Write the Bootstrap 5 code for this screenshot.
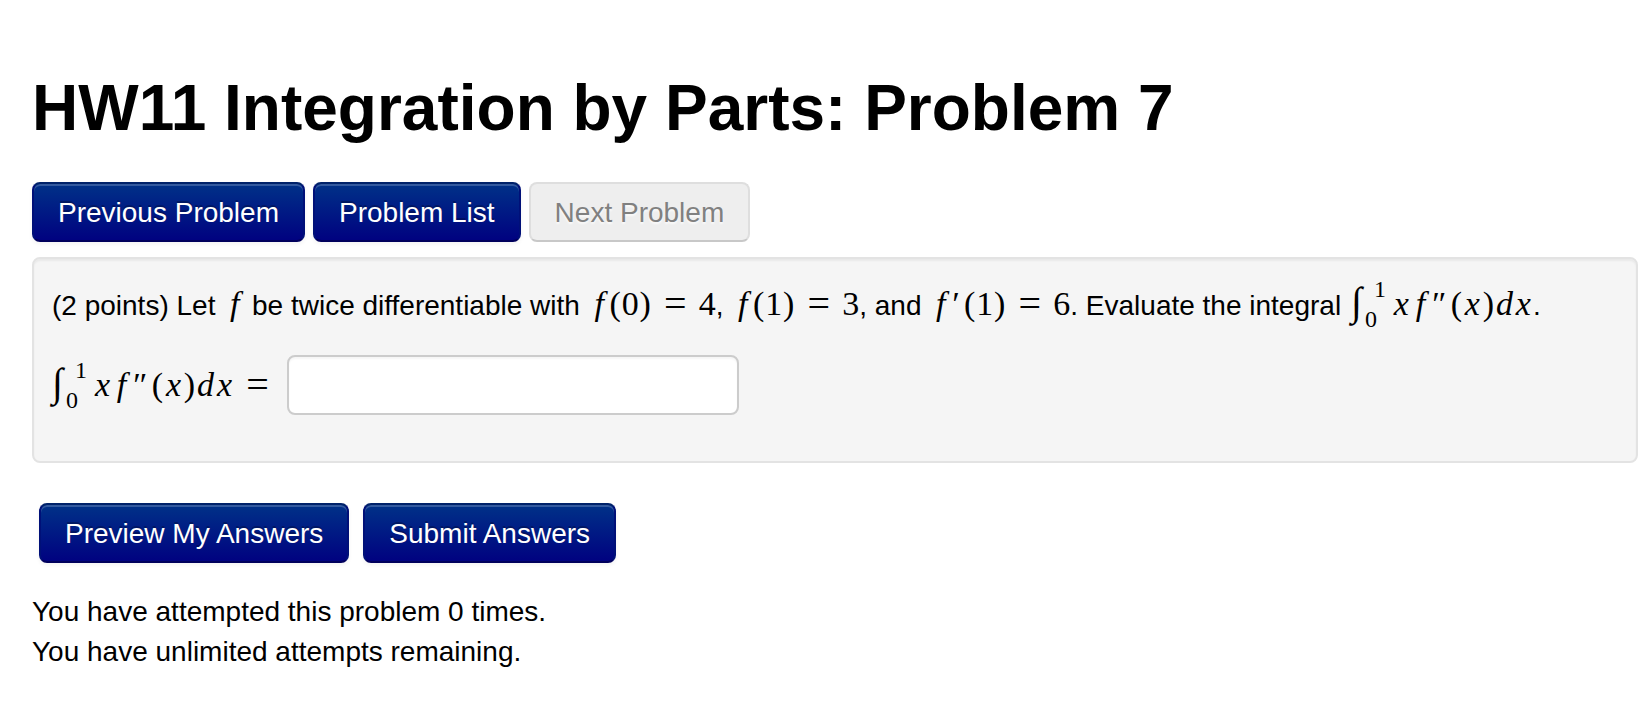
<!DOCTYPE html>
<html lang="en">
<head>
<meta charset="utf-8">
<meta name="viewport" content="width=device-width, initial-scale=1">
<title>HW11 Integration by Parts: Problem 7</title>
<link href="https://cdn.jsdelivr.net/npm/bootstrap@5.3.0/dist/css/bootstrap.min.css" rel="stylesheet">
<style>
  body { font: 28px/40px "Liberation Sans", Arial, sans-serif; color: #000; background: #fff; }
  .page { padding: 68px 8px 48px 32px; }
  h1 { font-size: 64px; line-height: 80px; font-weight: 700; margin-bottom: 34px; }

  .btn {
    --bs-btn-font-size: 28px;
    --bs-btn-line-height: 40px;
    --bs-btn-padding-x: 24px;
    --bs-btn-border-width: 2px;
    --bs-btn-border-radius: 8px;
    padding-top: 9px;
    padding-bottom: 7px;
  }
  .btn-wide-blue {
    --bs-btn-color: #fff;
    --bs-btn-hover-color: #fff;
    --bs-btn-active-color: #fff;
    background: linear-gradient(#038, #000080) border-box;
    border-color: #00226a #001078 #00005c;
    box-shadow: inset 0 2px 0 rgba(255, 255, 255, .2), 0 2px 4px rgba(0, 0, 0, .05);
    text-shadow: 0 -2px 0 rgba(0, 0, 0, .25);
  }
  .btn-muted {
    --bs-btn-disabled-color: #808080;
    --bs-btn-disabled-bg: #eee;
    --bs-btn-disabled-opacity: 1;
    border-color: #dedede #dedede #c8c8c8 !important;
    text-shadow: 0 2px 2px rgba(255, 255, 255, .75);
  }

  .problem {
    margin-top: 15px;
    padding: 15px 18px 46px;
    background: #f5f5f5;
    border: 2px solid #e3e3e3;
    border-radius: 8px;
    box-shadow: inset 0 2px 2px rgba(0, 0, 0, .05);
  }
  .answer-row { margin-top: 21px; gap: 6px; }
  .answer {
    width: 452px;
    height: 60px;
    border: 2px solid #ccc;
    border-radius: 8px;
    font-size: 28px;
    box-shadow: inset 0 2px 2px rgba(0, 0, 0, .04);
  }
  .submit-row { margin: 40px 7px 29px; gap: 14px; }

  /* formulas: every symbol sits in a box as wide as its class of symbol */
  .fm { font-family: "Liberation Serif", "Times New Roman", serif; font-size: 34px; line-height: 40px; white-space: nowrap; }
  p .fm { padding-left: 2px; }
  .fm span { display: inline-block; text-align: center; }
  .fm .v { font-style: italic; width: 19px; }
  .fm .p { width: 13px; }
  .fm .n { width: 17px; }
  .fm .pr { width: 13px; text-align: left; font-style: italic; }
  .fm .pr2 { width: 20px; text-align: left; font-style: italic; }
  .fm .eq { width: 47px; font-size: 40px; vertical-align: -2px; }
  .fm .int { width: 14px; text-align: left; font-size: 40px; }
  .fm .lim { width: 27px; font-size: 24px; line-height: 30px; vertical-align: -12px; }
  .fm .lim span { display: block; text-align: left; }
  .fm .lim .hi { padding-left: 9px; }
</style>
</head>
<body>
<main class="page">
  <h1>HW11 Integration by Parts: Problem 7</h1>

  <nav class="d-flex flex-wrap gap-2" aria-label="Problems">
    <button type="button" class="btn btn-wide-blue">Previous Problem</button>
    <button type="button" class="btn btn-wide-blue">Problem List</button>
    <button type="button" class="btn btn-muted" disabled>Next Problem</button>
  </nav>

  <form>
    <section class="problem">
      <p class="mb-0">(2 points) Let <span class="fm"><span class="v">f</span></span> be twice differentiable with <span class="fm"><span class="v">f</span><span class="p">(</span><span class="n">0</span><span class="p">)</span><span class="eq">=</span><span class="n">4</span></span>, <span class="fm"><span class="v">f</span><span class="p">(</span><span class="n">1</span><span class="p">)</span><span class="eq">=</span><span class="n">3</span></span>, and <span class="fm"><span class="v">f</span><span class="pr">′</span><span class="p">(</span><span class="n">1</span><span class="p">)</span><span class="eq">=</span><span class="n">6</span></span>. Evaluate the integral <span class="fm"><span class="int">∫</span><span class="lim"><span class="hi">1</span><span>0</span></span><span class="v">x</span><span class="v">f</span><span class="pr2">″</span><span class="p">(</span><span class="v">x</span><span class="p">)</span><span class="v">d</span><span class="v">x</span></span>.</p>
      <div class="d-flex align-items-center answer-row">
        <label for="answer" class="fm"><span class="int">∫</span><span class="lim"><span class="hi">1</span><span>0</span></span><span class="v">x</span><span class="v">f</span><span class="pr2">″</span><span class="p">(</span><span class="v">x</span><span class="p">)</span><span class="v">d</span><span class="v">x</span><span class="eq">=</span></label>
        <input id="answer" type="text" class="form-control answer">
      </div>
    </section>

    <div class="d-flex flex-wrap submit-row">
      <button type="button" class="btn btn-wide-blue">Preview My Answers</button>
      <button type="button" class="btn btn-wide-blue">Submit Answers</button>
    </div>
  </form>

  <p class="mb-0">You have attempted this problem 0 times.<br>You have unlimited attempts remaining.</p>
</main>
<script src="https://cdn.jsdelivr.net/npm/bootstrap@5.3.0/dist/js/bootstrap.bundle.min.js"></script>
</body>
</html>
